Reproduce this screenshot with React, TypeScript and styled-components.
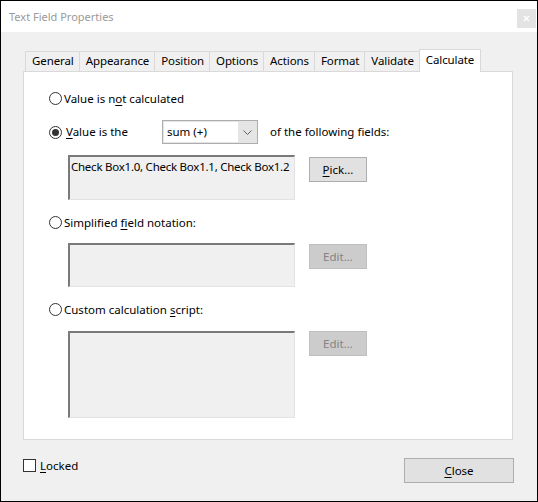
import React from "react";
import styled, { createGlobalStyle } from "styled-components";

const GlobalStyle = createGlobalStyle`
  html, body { margin: 0; padding: 0; background: #f0f0f0; }
  body {
    font-family: "Noto Sans", "DejaVu Sans", sans-serif;
    font-size: 11.5px;
    color: #000;
  }
  * { box-sizing: border-box; }
`;

const Window = styled.div`
  width: 538px;
  height: 502px;
  border: 1px solid #000;
  background: #f0f0f0;
  display: flex;
  flex-direction: column;
`;

const TitleBar = styled.div`
  height: 31px;
  background: #fff;
  display: flex;
  align-items: flex-start;
  justify-content: space-between;
  padding-left: 8px;
`;

const Title = styled.span`
  color: #9a9a9a;
  font-size: 11px;
  line-height: 16px;
  margin-top: 8px;
`;

const CloseBox = styled.div`
  width: 19px;
  height: 19px;
  margin-top: 8px;
  margin-right: 1px;
  background: #e3e3e3;
  display: flex;
  align-items: center;
  justify-content: center;
`;

const Body = styled.div`
  flex: 1;
  padding: 17px 24px 0 22px;
  display: flex;
  flex-direction: column;
`;

const TabRow = styled.div`
  height: 22px;
  display: flex;
  align-items: flex-end;
  padding-left: 2px;
`;

const Tab = styled.div<{ $active?: boolean }>`
  position: relative;
  height: ${(p) => (p.$active ? "23px" : "20px")};
  margin-bottom: ${(p) => (p.$active ? "-1px" : "0")};
  margin-left: -1px;
  padding: ${(p) => (p.$active ? "1px 6px 0" : "0 5px 0 6px")};
  border: 1px solid #d9d9d9;
  border-bottom: none;
  background: ${(p) => (p.$active ? "#fff" : "#f0f0f0")};
  z-index: ${(p) => (p.$active ? 1 : 0)};
  line-height: 18px;
  letter-spacing: -0.1px;
  white-space: nowrap;
  &:first-child { margin-left: 0; }
`;

const Panel = styled.div`
  height: 369px;
  background: #fff;
  border: 1px solid #d9d9d9;
  padding: 20px 0 0 25px;
  display: flex;
  flex-direction: column;
`;

const OptionRow = styled.div<{ $top?: number; $h?: number }>`
  display: flex;
  align-items: center;
  height: ${(p) => p.$h ?? 13}px;
  margin-top: ${(p) => p.$top ?? 0}px;
  white-space: nowrap;
`;

const RadioCircle = styled.span<{ $checked?: boolean }>`
  width: 13px;
  height: 13px;
  border-radius: 50%;
  border: 1px solid #333;
  background: #fff;
  display: flex;
  align-items: center;
  justify-content: center;
  flex: none;
  &::after {
    content: "";
    display: ${(p) => (p.$checked ? "block" : "none")};
    width: 7px;
    height: 7px;
    border-radius: 50%;
    background: #333;
  }
`;

const OptionLabel = styled.span<{ $w?: number; $gap?: number }>`
  margin-left: ${(p) => p.$gap ?? 2}px;
  line-height: 16px;
  ${(p) => (p.$w ? `width: ${p.$w}px;` : "")}
`;

const Accel = styled.span`
  text-decoration: underline;
  text-underline-offset: 2px;
`;

const Select = styled.div`
  width: 96px;
  height: 24px;
  border: 1px solid #adadad;
  background: #e5e5e5;
  padding: 1px;
  display: flex;
  align-items: stretch;
`;

const SelectValue = styled.div`
  width: 74px;
  background: #fff;
  padding-left: 3px;
  line-height: 20px;
`;

const SelectArrow = styled.div`
  flex: 1;
  display: flex;
  align-items: center;
  justify-content: center;
`;

const AfterText = styled.span`
  margin-left: 12px;
  line-height: 16px;
`;

const FieldRow = styled.div<{ $top: number }>`
  display: flex;
  align-items: flex-start;
  gap: 14px;
  margin-top: ${(p) => p.$top}px;
  margin-left: 19px;
`;

const TextBox = styled.div<{ $h: number }>`
  width: 227px;
  height: ${(p) => p.$h}px;
  background: #f0f0f0;
  border-style: solid;
  border-width: 2px 1px 1px 2px;
  border-color: #7a7a7a #e3e3e3 #e3e3e3 #7a7a7a;
  padding: 1px 0 0 1px;
  line-height: 18px;
  letter-spacing: -0.25px;
  white-space: nowrap;
  overflow: hidden;
`;

const Button = styled.div<{ $disabled?: boolean; $top?: number; $w?: number }>`
  width: ${(p) => p.$w ?? 58}px;
  height: 25px;
  margin-top: ${(p) => p.$top ?? 0}px;
  background: ${(p) => (p.$disabled ? "#cccccc" : "#e1e1e1")};
  border: 1px solid ${(p) => (p.$disabled ? "#bfbfbf" : "#adadad")};
  color: ${(p) => (p.$disabled ? "#838383" : "#000")};
  display: flex;
  align-items: center;
  justify-content: center;
  flex: none;
`;

const Footer = styled.div`
  display: flex;
  justify-content: space-between;
  align-items: flex-start;
  margin-top: 18px;
  margin-right: -1px;
`;

const CheckRow = styled.div`
  display: flex;
  align-items: center;
  margin-top: 1px;
  height: 13px;
`;

const CheckBox = styled.span`
  width: 13px;
  height: 13px;
  border: 1px solid #333;
  background: #fff;
`;

const CheckLabel = styled.span`
  margin-left: 4px;
  line-height: 16px;
`;

export default function App() {
  return (
    <>
      <GlobalStyle />
      <Window>
        <TitleBar>
          <Title>Text Field Properties</Title>
          <CloseBox>
            <svg width="7" height="7" viewBox="0 0 7 7">
              <path d="M1 1 L6 6 M6 1 L1 6" stroke="#ffffff" strokeWidth="1.4" />
            </svg>
          </CloseBox>
        </TitleBar>
        <Body>
          <TabRow>
            <Tab>General</Tab>
            <Tab>Appearance</Tab>
            <Tab>Position</Tab>
            <Tab>Options</Tab>
            <Tab>Actions</Tab>
            <Tab>Format</Tab>
            <Tab>Validate</Tab>
            <Tab $active>Calculate</Tab>
          </TabRow>
          <Panel>
            <OptionRow>
              <RadioCircle />
              <OptionLabel>
                Value is n<Accel>o</Accel>t calculated
              </OptionLabel>
            </OptionRow>
            <OptionRow $top={15} $h={24}>
              <RadioCircle $checked />
              <OptionLabel $w={96} $gap={4}>
                <Accel>V</Accel>alue is the
              </OptionLabel>
              <Select>
                <SelectValue>sum (+)</SelectValue>
                <SelectArrow>
                  <svg width="9" height="5" viewBox="0 0 9 5">
                    <path d="M0.5 0.5 L4.5 4.5 L8.5 0.5" fill="none" stroke="#606060" strokeWidth="1" />
                  </svg>
                </SelectArrow>
              </Select>
              <AfterText>of the following fields:</AfterText>
            </OptionRow>
            <FieldRow $top={11}>
              <TextBox $h={45}>Check Box1.0, Check Box1.1, Check Box1.2</TextBox>
              <Button $top={2}>
                <span>
                  <Accel>P</Accel>ick...
                </span>
              </Button>
            </FieldRow>
            <OptionRow $top={16}>
              <RadioCircle />
              <OptionLabel>
                Simplified <Accel>f</Accel>ield notation:
              </OptionLabel>
            </OptionRow>
            <FieldRow $top={14}>
              <TextBox $h={44} />
              <Button $disabled $top={1}>
                Edit...
              </Button>
            </FieldRow>
            <OptionRow $top={16}>
              <RadioCircle />
              <OptionLabel>
                Custom calculation <Accel>s</Accel>cript:
              </OptionLabel>
            </OptionRow>
            <FieldRow $top={15}>
              <TextBox $h={87} />
              <Button $disabled>Edit...</Button>
            </FieldRow>
          </Panel>
          <Footer>
            <CheckRow>
              <CheckBox />
              <CheckLabel>
                <Accel>L</Accel>ocked
              </CheckLabel>
            </CheckRow>
            <Button $w={110}>
              <span>
                <Accel>C</Accel>lose
              </span>
            </Button>
          </Footer>
        </Body>
      </Window>
    </>
  );
}
